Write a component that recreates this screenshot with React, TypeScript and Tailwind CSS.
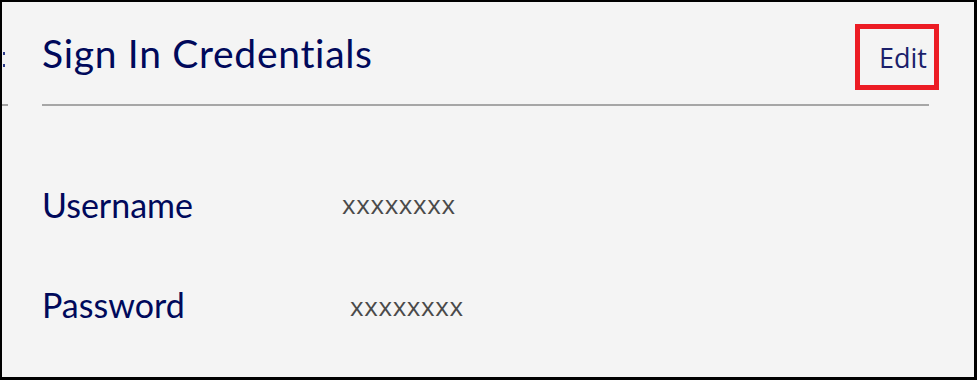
export default function App() {
  return (
    <div className="w-[979px] h-[380px] bg-white">
      <div className="relative w-[977px] h-[380px] border-t-2 border-l-2 border-r-[3px] border-b-[3px] border-black bg-[#f4f4f4] overflow-hidden">
        {/* cut-off bits of the neighbouring panel */}
        <div className="absolute left-[1px] top-[50px] flex flex-col gap-[9px]">
          <div className="w-[2px] h-[3px] bg-[#2b3a8a]" />
          <div className="w-[2px] h-[3px] bg-[#2b3a8a]" />
        </div>
        <div className="absolute left-0 top-[102px] w-[6px] h-[2px] bg-[#a3a3a3]" />

        <div className="pl-[40px] pr-[45px] pt-[22px]">
          <div className="flex items-center justify-between h-[66px]">
            <h1 className="font-['Lato',sans-serif] text-[39px] leading-none tracking-[0.7px] text-[#00095b] -mt-[8px]">
              Sign In Credentials
            </h1>
            <button className="w-[84px] h-[66px] -mr-[10px] border-[5px] border-[#ec1c24] flex items-center justify-center font-['Open_Sans',sans-serif] text-[27px] leading-none text-[#1b1f6b] pl-[12px]">
              Edit
            </button>
          </div>
          <div className="mt-[14px] h-[2px] bg-[#a6a6a6]" />

          <div className="mt-[82px] flex items-baseline">
            <span className="w-[300px] font-['Lato',sans-serif] text-[34px] leading-none text-[#00095b]">
              Username
            </span>
            <span className="font-['Open_Sans',sans-serif] text-[26px] leading-none tracking-[0.6px] text-[#4a4a4a] -translate-y-[4px]">
              xxxxxxxx
            </span>
          </div>
          <div className="mt-[66px] flex items-baseline">
            <span className="w-[308px] font-['Lato',sans-serif] text-[34px] leading-none text-[#00095b]">
              Password
            </span>
            <span className="font-['Open_Sans',sans-serif] text-[26px] leading-none tracking-[0.6px] text-[#4a4a4a] -translate-y-[2px]">
              xxxxxxxx
            </span>
          </div>
        </div>
      </div>
    </div>
  );
}
